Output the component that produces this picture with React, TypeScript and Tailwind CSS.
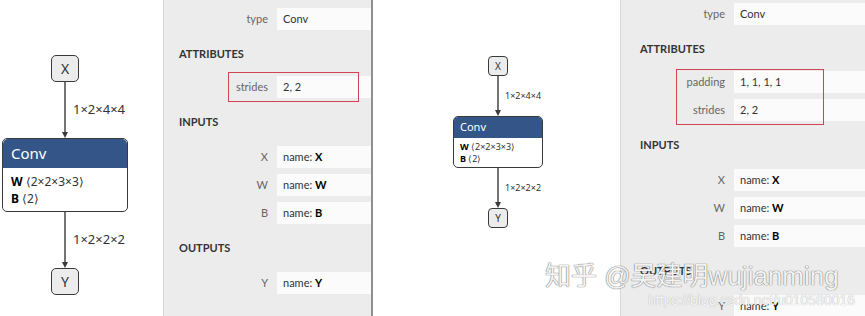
import React from "react";

type Row = { label: string; value: React.ReactNode };

type GraphSize = {
  pt: string;
  ml: string;
  width: string;
  node: string;
  nodeText: string;
  edgeH: number;
  edgeLabel: string;
  labelPl: string;
  header: string;
  headerText: string;
  body: string;
  bodyText: string;
};

const font = { fontFamily: '"Noto Sans", "Open Sans", sans-serif' };
const sideFont = { fontFamily: 'Lato, "Noto Sans", sans-serif' };

const big: GraphSize = {
  pt: "pt-[55px]",
  ml: "ml-[2px]",
  width: "w-[126px]",
  node: "w-[28px] h-[27px] rounded-[5px]",
  nodeText: "text-[14px]",
  edgeH: 56,
  edgeLabel: "text-[13px]",
  labelPl: "pl-[3px]",
  header: "h-[29px] pl-[8px] rounded-t-[5px]",
  headerText: "text-[15px]",
  body: "h-[43px] pl-[8px] pt-[5px]",
  bodyText: "text-[12px] leading-[17px]",
};

const small: GraphSize = {
  pt: "pt-[56px]",
  ml: "ml-[80px]",
  width: "w-[90px]",
  node: "w-[20px] h-[20px] rounded-[4px]",
  nodeText: "text-[10px]",
  edgeH: 40,
  edgeLabel: "text-[9px]",
  labelPl: "pl-[2px]",
  header: "h-[21px] pl-[6px] rounded-t-[4px]",
  headerText: "text-[11px]",
  body: "h-[29px] pl-[6px] pt-[3px]",
  bodyText: "text-[9px] leading-[12px]",
};

const Node = ({ name, s }: { name: string; s: GraphSize }) => (
  <div
    className={`${s.node} ${s.nodeText} flex items-center justify-center border border-[#3a3a3a] bg-[#ececec] text-[#333]`}
  >
    {name}
  </div>
);

const Edge = ({ label, s }: { label: string; s: GraphSize }) => {
  const h = s.edgeH;
  return (
    <div className="grid w-full grid-cols-[1fr_10px_1fr]" style={{ height: h }}>
      <div />
      <svg width="10" height={h}>
        <line x1="5" y1="0" x2="5" y2={h - 4} stroke="#3a3a3a" strokeWidth="1.4" />
        <polygon points={`2,${h - 6} 8,${h - 6} 5,${h}`} fill="#3a3a3a" />
      </svg>
      <div className={`flex items-center ${s.labelPl} ${s.edgeLabel} whitespace-nowrap text-[#333]`}>
        {label}
      </div>
    </div>
  );
};

const Graph = ({ s, w }: { s: GraphSize; w: string }) => (
  <div className={`${w} h-full shrink-0 bg-white`}>
    <div className={`flex flex-col items-center ${s.pt} ${s.ml} ${s.width}`}>
      <Node name="X" s={s} />
      <Edge label="1×2×4×4" s={s} />
      <div className="w-full rounded-[5px] border border-[#3a3a3a] bg-white">
        <div className={`${s.header} ${s.headerText} flex items-center bg-[#335588] text-white`}>Conv</div>
        <div className={`${s.body} ${s.bodyText} text-[#333]`}>
          <div>
            <b className="text-black">W</b> ⟨2×2×3×3⟩
          </div>
          <div>
            <b className="text-black">B</b> ⟨2⟩
          </div>
        </div>
      </div>
      <Edge label="1×2×2×2" s={s} />
      <Node name="Y" s={s} />
    </div>
  </div>
);

const Name = ({ n }: { n: string }) => (
  <span>
    name: <b className="text-black">{n}</b>
  </span>
);

const PropRow = ({ row }: { row: Row }) => (
  <div className="flex h-[22px] items-center">
    <div className="w-[105px] pr-[1px] text-right text-[11px] text-[#666]">{row.label}</div>
    <div className="ml-[8px] flex h-full flex-1 items-center bg-[#fbfbfb] pl-[6px] text-[11px] text-[#333]">
      {row.value}
    </div>
  </div>
);

const Header = ({ text }: { text: string }) => (
  <div className="mt-4 flex h-4 items-center text-[11px] font-bold text-[#333]">{text}</div>
);

const Sidebar = ({
  pt,
  hx,
  attrs,
  redBox,
}: {
  pt: string;
  hx: string;
  attrs: Row[];
  redBox: string;
}) => (
  <div className={`h-full flex-1 border-l border-[#d8d8d8] bg-[#ececec] ${pt}`} style={sideFont}>
    <PropRow row={{ label: "type", value: "Conv" }} />
    <div className={hx}>
      <Header text="ATTRIBUTES" />
    </div>
    <div className="relative mt-[14px] flex flex-col gap-[6px]">
      {attrs.map((r) => (
        <PropRow key={r.label} row={r} />
      ))}
      <div className={`absolute border border-[#cf4452] ${redBox}`} />
    </div>
    <div className={hx}>
      <Header text="INPUTS" />
    </div>
    <div className="mt-4 flex flex-col gap-[6px]">
      <PropRow row={{ label: "X", value: <Name n="X" /> }} />
      <PropRow row={{ label: "W", value: <Name n="W" /> }} />
      <PropRow row={{ label: "B", value: <Name n="B" /> }} />
    </div>
    <div className={hx}>
      <Header text="OUTPUTS" />
    </div>
    <div className="mt-4">
      <PropRow row={{ label: "Y", value: <Name n="Y" /> }} />
    </div>
  </div>
);

export default function App() {
  return (
    <div className="relative flex h-[316px] w-[865px] overflow-hidden bg-white" style={font}>
      {/* left capture */}
      <div className="flex h-full w-[373px] shrink-0 border-r-2 border-[#8f8f8f]">
        <Graph s={big} w="w-[163px]" />
        <Sidebar
          pt="pt-[8px]"
          hx="pl-[15px]"
          attrs={[{ label: "strides", value: "2, 2" }]}
          redBox="left-[64px] w-[131px] -top-[4px] -bottom-[4px]"
        />
      </div>

      {/* right capture */}
      <div className="flex h-full flex-1">
        <Graph s={small} w="w-[247px]" />
        <Sidebar
          pt="pt-[3px]"
          hx="pl-[19px]"
          attrs={[
            { label: "padding", value: "1, 1, 1, 1" },
            { label: "strides", value: "2, 2" },
          ]}
          redBox="left-[55px] w-[148px] -top-[2px] -bottom-[4px]"
        />
      </div>

      {/* watermark */}
      <div
        className="pointer-events-none absolute left-[545px] top-[259px] whitespace-nowrap text-[26px] leading-[34px] text-[#f2f2f2] [text-shadow:0_0_1px_#6f6f6f,0_0_1px_#6f6f6f]"
        style={{ fontFamily: '"Liberation Sans", "Noto Sans CJK SC", sans-serif' }}
      >
        知乎 @吴建明wujianming
      </div>
      <div
        className="pointer-events-none absolute left-[648px] top-[292px] whitespace-nowrap text-[14px] leading-[16px] text-[#f6f6f6] [text-shadow:0_0_1px_#a0a0a0]"
        style={{ fontFamily: '"Liberation Sans", sans-serif' }}
      >
        https://blog.csdn.net/u010580016
      </div>
    </div>
  );
}
